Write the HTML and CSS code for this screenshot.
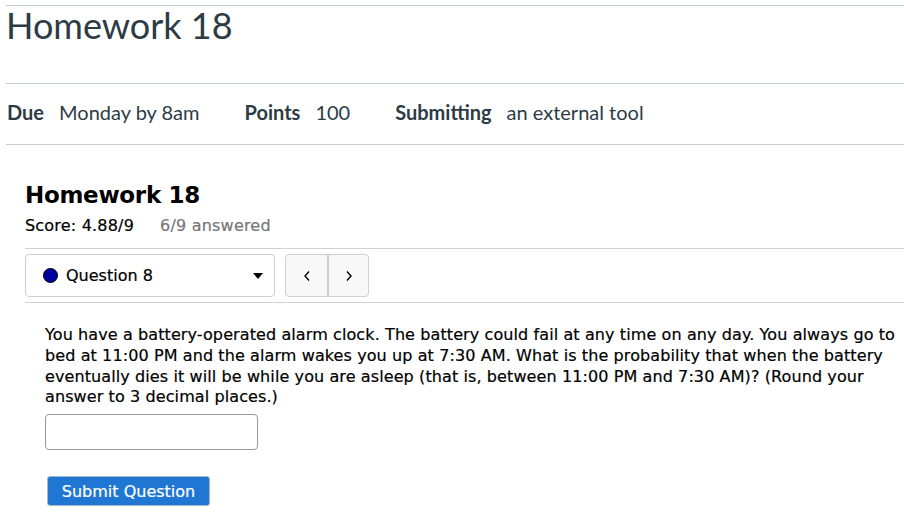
FILE: index.html
```html
<!DOCTYPE html>
<html lang="en">
<head>
<meta charset="utf-8">
<title>Homework 18</title>
<link rel="stylesheet" href="styles.css">
</head>
<body>
<div class="assignment">
  <h1 class="assignment-title">Homework 18</h1>
  <ul class="details">
    <li class="detail"><span class="label">Due</span><span class="value">Monday by 8am</span></li>
    <li class="detail"><span class="label">Points</span><span class="value">100</span></li>
    <li class="detail"><span class="label">Submitting</span><span class="value">an external tool</span></li>
  </ul>
</div>
<div class="tool">
  <h2 class="hw-title">Homework 18</h2>
  <div class="score-line"><span class="score">Score: 4.88/9</span><span class="answered">6/9 answered</span></div>
  <div class="nav-row">
    <div class="qselect">
      <span class="dot"></span>
      <span class="qname">Question 8</span>
      <svg class="caret" width="10" height="6" viewBox="0 0 10 6"><polygon points="0,0 10,0 5,6" fill="#000"/></svg>
    </div>
    <div class="pager">
      <button class="pbtn"><svg width="8" height="12" viewBox="0 0 8 12"><polyline points="6,1.5 2,6 6,10.5" fill="none" stroke="#000" stroke-width="1.4"/></svg></button>
      <button class="pbtn"><svg width="8" height="12" viewBox="0 0 8 12"><polyline points="2,1.5 6,6 2,10.5" fill="none" stroke="#000" stroke-width="1.4"/></svg></button>
    </div>
  </div>
  <div class="question">
    <p class="qtext">You have a battery-operated alarm clock. The battery could fail at any time on any day. You always go to bed at 11:00 PM and the alarm wakes you up at 7:30 AM. What is the probability that when the battery eventually dies it will be while you are asleep (that is, between 11:00 PM and 7:30 AM)? (Round your answer to 3 decimal places.)</p>
    <input class="answer" type="text" aria-label="answer">
    <div class="submit-wrap"><button class="submit">Submit Question</button></div>
  </div>
</div>
</body>
</html>
```
FILE: styles.css
```css
* { box-sizing: border-box; }
body { margin: 0; background: #fff; }

.assignment {
  margin: 5px 0 0 6px;
  border-top: 1px solid #c7cdd1;
  font-family: Lato, "Liberation Sans", sans-serif;
  color: #2d3b45;
}
.assignment-title {
  margin: 0;
  padding-top: 1px;
  font-size: 36px;
  font-weight: 400;
  line-height: 36px;
  height: 77px;
}
.details {
  list-style: none;
  margin: 0;
  padding: 16px 0 20px 1px;
  border-top: 1px solid #c7cdd1;
  border-bottom: 1px solid #c7cdd1;
  display: flex;
  gap: 45px;
  font-size: 20px;
  line-height: 24px;
}
.detail { display: flex; gap: 15px; }
.label { font-weight: 700; }

.tool {
  padding: 36px 0 0 25px;
  font-family: "DejaVu Sans", Verdana, sans-serif;
  color: #000;
}
.hw-title {
  margin: 0;
  font-size: 23px;
  line-height: 28px;
  letter-spacing: -0.3px;
  font-weight: 700;
}
.score-line {
  margin-top: 7px;
  font-size: 16px;
  line-height: 20px;
  display: flex;
  gap: 26px;
  -webkit-text-stroke: 0.2px currentColor;
}
.score { letter-spacing: 0.2px; }
.answered { color: #767676; letter-spacing: 0.2px; }

.nav-row {
  margin-top: 12px;
  border-top: 1px solid #d0d0d0;
  border-bottom: 1px solid #d0d0d0;
  padding: 5px 0;
  display: flex;
  gap: 10px;
}
.qselect {
  width: 250px;
  height: 43px;
  border: 1px solid #cfcfcf;
  border-radius: 4px;
  display: flex;
  align-items: center;
  padding: 0 11px 0 17px;
  font-size: 16px;
  -webkit-text-stroke: 0.2px currentColor;
}
.dot {
  width: 15px;
  height: 15px;
  border-radius: 50%;
  background: #0000a0;
  border: 1px solid #000;
  margin-right: 8px;
  flex: none;
}
.qname { flex: 1; }
.caret { flex: none; }
.pager {
  display: flex;
  border: 1px solid #d0d0d0;
  border-radius: 4px;
  background: #f8f8f8;
  height: 43px;
  overflow: hidden;
}
.pbtn {
  width: 41px;
  border: 0;
  background: transparent;
  padding: 0;
  display: flex;
  align-items: center;
  justify-content: center;
}
.pbtn + .pbtn { border-left: 2px solid #d0d0d0; }

.question { padding: 22px 0 0 20px; }
.qtext {
  margin: 0;
  font-size: 16px;
  line-height: 20.8px;
  letter-spacing: 0.1px;
  -webkit-text-stroke: 0.2px currentColor;
}
.answer {
  display: block;
  margin-top: 6px;
  width: 213px;
  height: 36px;
  border: 1px solid #999;
  border-radius: 4px;
  background: #fff;
}
.submit-wrap { padding: 26px 0 0 2px; }
.submit {
  width: 163px;
  height: 30px;
  background: #1f76d3;
  color: #fff;
  border: 1px solid #a9b8c8;
  border-radius: 3px;
  font-family: "DejaVu Sans", Verdana, sans-serif;
  font-size: 16px;
  padding: 0;
  -webkit-text-stroke: 0.2px currentColor;
}
```
